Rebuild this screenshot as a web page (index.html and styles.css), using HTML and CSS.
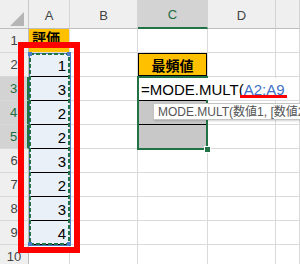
FILE: index.html
```html
<!DOCTYPE html>
<html lang="ja">
<head>
<meta charset="utf-8">
<title>MODE.MULT</title>
<link rel="stylesheet" href="styles.css">
</head>
<body>
<div class="sheet">
  <div class="corner"><svg width="29" height="29" viewBox="0 0 29 29"><polygon points="24,12 24,26 10,26" fill="#b5b5b5"/></svg></div>
  <div class="colh">A</div><div class="colh">B</div><div class="colh sel">C</div><div class="colh">D</div><div class="colh"></div>

  <div class="rowh">1</div><div class="cell orange a1">評価</div><div class="cell"></div><div class="cell"></div><div class="cell"></div><div class="cell"></div>
  <div class="rowh">2</div><div class="cell rng">1</div><div class="cell"></div><div class="cell orange c2">最頻値</div><div class="cell"></div><div class="cell"></div>
  <div class="rowh sel">3</div><div class="cell rng">3</div><div class="cell"></div><div class="cell cbox"></div><div class="cell"></div><div class="cell"></div>
  <div class="rowh sel">4</div><div class="cell rng">2</div><div class="cell"></div><div class="cell cbox gray"></div><div class="cell"></div><div class="cell"></div>
  <div class="rowh sel">5</div><div class="cell rng">2</div><div class="cell"></div><div class="cell cbox gray"></div><div class="cell"></div><div class="cell"></div>
  <div class="rowh">6</div><div class="cell rng">3</div><div class="cell"></div><div class="cell"></div><div class="cell"></div><div class="cell"></div>
  <div class="rowh">7</div><div class="cell rng">2</div><div class="cell"></div><div class="cell"></div><div class="cell"></div><div class="cell"></div>
  <div class="rowh">8</div><div class="cell rng">3</div><div class="cell"></div><div class="cell"></div><div class="cell"></div><div class="cell"></div>
  <div class="rowh">9</div><div class="cell rng">4</div><div class="cell"></div><div class="cell"></div><div class="cell"></div><div class="cell"></div>
  <div class="rowh">10</div><div class="cell"></div><div class="cell"></div><div class="cell"></div><div class="cell"></div><div class="cell"></div>

  <svg class="ants" width="300" height="264" viewBox="0 0 300 264">
    <rect x="29.5" y="53.5" width="41" height="192" fill="none" stroke="#4a7cc9" stroke-width="1"/>
    <rect x="30" y="54" width="39" height="190" fill="none" stroke="#217346" stroke-width="2" stroke-dasharray="4 2"/>
    <rect x="28" y="52" width="4" height="4" fill="#4a7cc9"/>
    <rect x="67" y="52" width="4" height="4" fill="#4a7cc9"/>
    <rect x="28" y="242" width="4" height="4" fill="#4a7cc9"/>
    <rect x="67" y="242" width="4" height="4" fill="#4a7cc9"/>
  </svg>
  <div class="selbox"></div>
  <div class="fill-handle"></div>
  <div class="editor">=MODE.MULT(<span class="ref">A2:A9</span></div>
  <div class="tooltip">MODE.MULT(数値1, [数値2], ...)</div>
  <div class="red-line"></div>
  <div class="red-box"></div>
</div>
</body>
</html>
```

FILE: styles.css
```css
html, body {
  margin: 0;
  padding: 0;
  background: #ffffff;
  overflow: hidden;
}

.sheet {
  position: relative;
  width: 300px;
  height: 264px;
  overflow: hidden;
  display: grid;
  grid-template-columns: 29px 41px 68px 70px 68px 24px;
  grid-template-rows: 29px repeat(10, 24px);
  font-family: "Liberation Sans", Arial, sans-serif;
}

.sheet > div {
  box-sizing: border-box;
}

.corner {
  background: #efefef;
  border-right: 1px solid #c8c8c8;
  border-bottom: 1px solid #bdbdbd;
}

.corner svg {
  display: block;
}

.colh {
  background: #efefef;
  border-right: 1px solid #d4d4d4;
  border-bottom: 1px solid #bdbdbd;
  color: #444444;
  font-size: 13px;
  display: flex;
  align-items: center;
  justify-content: center;
  padding-top: 2px;
}

.colh.sel {
  background: #d3d3d3;
  color: #1e6b41;
  border-bottom: 2px solid #217346;
}

.rowh {
  background: #efefef;
  border-right: 1px solid #bdbdbd;
  border-bottom: 1px solid #d8d8d8;
  color: #444444;
  font-size: 13px;
  display: flex;
  align-items: center;
  justify-content: center;
}

.rowh.sel {
  background: #d3d3d3;
  color: #1e6b41;
  border-right: 2px solid #217346;
}

.cell {
  background: #ffffff;
  border-right: 1px solid #dadada;
  border-bottom: 1px solid #dadada;
  font-size: 15px;
  color: #000000;
  display: flex;
  align-items: center;
}

.orange {
  background: #ffc000;
  font-family: "Noto Sans CJK JP", "Liberation Sans", sans-serif;
  font-weight: bold;
  font-size: 14px;
}

.a1 {
  padding-left: 3px;
  padding-bottom: 7px;
}

.c2 {
  justify-content: center;
  box-shadow: inset 0 0 0 1px #000000;
}

.rng {
  background: #eaf0f8;
  border-bottom: 1px solid #000000;
  justify-content: flex-end;
  padding-right: 3px;
  padding-top: 1px;
}

.cbox {
  border-bottom: 1px solid #000000;
  border-right: 1px solid #000000;
}

.gray {
  background: #c8c8c8;
}

.ants {
  position: absolute;
  left: 0;
  top: 0;
}

.selbox {
  position: absolute;
  left: 137px;
  top: 76px;
  width: 71px;
  height: 74px;
  border: 2px solid #217346;
}

.fill-handle {
  position: absolute;
  left: 204px;
  top: 146px;
  width: 7px;
  height: 7px;
  background: #217346;
  border: 1px solid #ffffff;
}

.editor {
  position: absolute;
  left: 139px;
  top: 78px;
  width: 148px;
  height: 22px;
  background: #ffffff;
  padding-left: 2px;
  font-size: 15px;
  line-height: 24px;
  color: #000000;
  white-space: nowrap;
}

.ref {
  color: #3e6fc4;
  text-decoration: underline;
  text-decoration-thickness: 1px;
}

.tooltip {
  position: absolute;
  left: 153px;
  top: 103px;
  height: 17px;
  background: #ffffff;
  border: 1px solid #c4c4c4;
  box-shadow: 1px 1px 2px rgba(0, 0, 0, 0.18);
  padding: 0 4px;
  font-family: "Liberation Sans", "Noto Sans CJK JP", sans-serif;
  font-size: 12px;
  line-height: 16px;
  color: #555555;
  white-space: nowrap;
}

.red-line {
  position: absolute;
  left: 240px;
  top: 95px;
  width: 47px;
  height: 3px;
  background: #ff0000;
}

.red-box {
  position: absolute;
  left: 18px;
  top: 42px;
  width: 62px;
  height: 211px;
  border: 6px solid #ff0000;
}
```
